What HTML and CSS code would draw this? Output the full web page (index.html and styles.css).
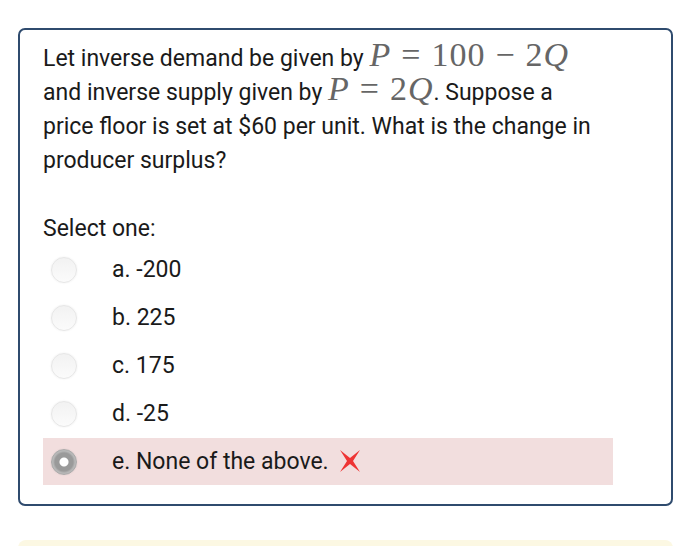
FILE: index.html
```html
<!DOCTYPE html>
<html>
<head>
<meta charset="utf-8">
<link rel="stylesheet" href="styles.css">
</head>
<body>
<div class="page">
  <div class="card">
    <div class="qtext">
      Let inverse demand be given by <span class="math"><i>P</i><span class="op">=</span>100<span class="op">−</span>2<i>Q</i></span><br>
      and inverse supply given by <span class="math"><i>P</i><span class="op">=</span>2<i>Q</i></span>. Suppose a<br>
      price floor is set at $60 per unit. What is the change in<br>
      producer surplus?
    </div>
    <div class="prompt">Select one:</div>
    <div class="answers">
      <div class="opt"><span class="radio"></span><span class="label">a. -200</span></div>
      <div class="opt"><span class="radio"></span><span class="label">b. 225</span></div>
      <div class="opt"><span class="radio"></span><span class="label">c. 175</span></div>
      <div class="opt"><span class="radio"></span><span class="label">d. -25</span></div>
      <div class="opt incorrect"><span class="radio checked"></span><span class="label">e. None of the above.</span>
        <svg class="xmark" width="22" height="24" viewBox="0 0 22 24"><path d="M1 1 L11 9 L21 1 L14 12 L21 23 L11 15 L1 23 L8 12 Z" fill="#ee3434"/></svg>
      </div>
    </div>
  </div>
  <div class="next"></div>
</div>
</body>
</html>
```
FILE: styles.css
```css
html, body { margin: 0; padding: 0; background: #fff; }
body { font-family: Roboto, "Noto Sans", sans-serif; color: #1a1a1a; }
.page { padding: 28px 27px 0 18px; height: 546px; box-sizing: border-box; overflow: hidden; }
.card {
  border: 2px solid #2f4b6e;
  border-radius: 7px;
  padding: 12px 58px 18px 23px;
  height: 478px;
  box-sizing: border-box;
}
.qtext { font-size: 23px; line-height: 34px; }
.math { font-family: "Liberation Serif", "DejaVu Serif", serif; font-size: 34px; color: #666; line-height: 20px; letter-spacing: 1px; }
.math i { font-style: italic; }
.op { margin: 0 10px; }
.prompt { font-size: 23px; line-height: 34px; margin-top: 34px; }
.answers { margin-top: 0; }
.opt { display: flex; align-items: center; height: 47px; margin-bottom: 1px; font-size: 23px; }
.radio {
  width: 26px; height: 26px; border-radius: 50%;
  background: linear-gradient(#f2f2f2, #fbfbfb);
  border: 1px solid #e6e6e6;
  box-shadow: 0 0 2px rgba(0,0,0,0.08);
  margin-left: 8px; margin-right: 35px;
  box-sizing: border-box; flex: none;
}
.radio.checked {
  background: radial-gradient(circle, #fff 0 4px, #9a9a9a 5px 9px, #b8b8b8 11px);
  border: 1px solid #aaa;
}
.incorrect { background: #f2dede; }
.xmark { margin-left: 10px; margin-top: -2px; }
.next {
  margin-top: 34px; height: 40px;
  background: #fcf8e3;
  border-radius: 8px;
}
```
